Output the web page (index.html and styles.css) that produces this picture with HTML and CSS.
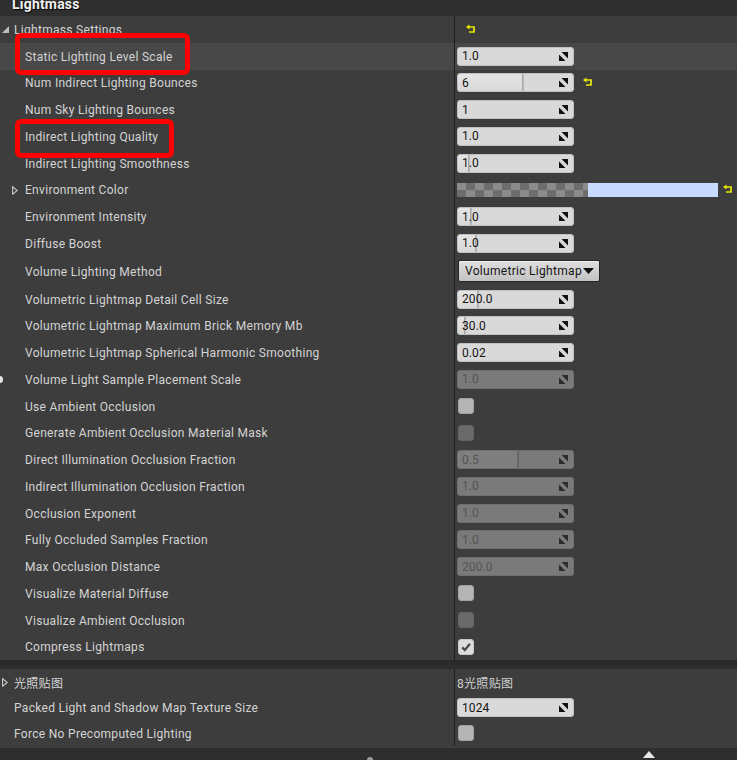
FILE: index.html
```html
<!DOCTYPE html>
<html>
<head>
<meta charset="utf-8">
<link rel="stylesheet" href="styles.css">
</head>
<body>
<div class="panel">
  <div class="header"><span>Lightmass</span></div>
  <div class="section">
    <div class="row">
      <div class="name cat"><svg class="tri-open" viewBox="0 0 7 7"><polygon points="7,0 7,7 0,7"/></svg>Lightmass Settings</div>
      <div class="val"><svg class="reset r1" viewBox="0 0 10 9"><path d="M3 2 H8 V7 H3"/><polygon points="0,2 3.5,-0.5 3.5,4.5"/></svg></div>
    </div>
    <div class="row hl">
      <div class="name">Static Lighting Level Scale</div>
      <div class="val"><div class="spin"><span class="txt">1.0</span><svg class="arr" viewBox="0 0 9 9"><polygon points="2.5,0 9,0 9,6.5"/><polygon points="0,2.5 0,9 6.5,9"/></svg></div></div>
    </div>
    <div class="row">
      <div class="name">Num Indirect Lighting Bounces</div>
      <div class="val"><div class="spin"><div class="fill big" style="width:64px"></div><span class="txt">6</span><svg class="arr" viewBox="0 0 9 9"><polygon points="2.5,0 9,0 9,6.5"/><polygon points="0,2.5 0,9 6.5,9"/></svg></div><svg class="reset" viewBox="0 0 10 9"><path d="M3 2 H8 V7 H3"/><polygon points="0,2 3.5,-0.5 3.5,4.5"/></svg></div>
    </div>
    <div class="row">
      <div class="name">Num Sky Lighting Bounces</div>
      <div class="val"><div class="spin"><span class="txt">1</span><svg class="arr" viewBox="0 0 9 9"><polygon points="2.5,0 9,0 9,6.5"/><polygon points="0,2.5 0,9 6.5,9"/></svg></div></div>
    </div>
    <div class="row">
      <div class="name">Indirect Lighting Quality</div>
      <div class="val"><div class="spin"><span class="txt">1.0</span><svg class="arr" viewBox="0 0 9 9"><polygon points="2.5,0 9,0 9,6.5"/><polygon points="0,2.5 0,9 6.5,9"/></svg></div></div>
    </div>
    <div class="row">
      <div class="name">Indirect Lighting Smoothness</div>
      <div class="val"><div class="spin"><div class="fill" style="width:10px"></div><span class="txt">1.0</span><svg class="arr" viewBox="0 0 9 9"><polygon points="2.5,0 9,0 9,6.5"/><polygon points="0,2.5 0,9 6.5,9"/></svg></div></div>
    </div>
    <div class="row">
      <div class="name"><svg class="tri-closed" viewBox="0 0 6 9"><polygon points="0.6,0.8 5.2,4.5 0.6,8.2"/></svg>Environment Color</div>
      <div class="val gap5"><div class="colorbar"><div class="checker"></div><div class="blue"></div></div><svg class="reset" viewBox="0 0 10 9"><path d="M3 2 H8 V7 H3"/><polygon points="0,2 3.5,-0.5 3.5,4.5"/></svg></div>
    </div>
    <div class="row">
      <div class="name">Environment Intensity</div>
      <div class="val"><div class="spin"><div class="fill" style="width:12px"></div><span class="txt">1.0</span><svg class="arr" viewBox="0 0 9 9"><polygon points="2.5,0 9,0 9,6.5"/><polygon points="0,2.5 0,9 6.5,9"/></svg></div></div>
    </div>
    <div class="row">
      <div class="name">Diffuse Boost</div>
      <div class="val"><div class="spin"><div class="fill" style="width:17px"></div><span class="txt">1.0</span><svg class="arr" viewBox="0 0 9 9"><polygon points="2.5,0 9,0 9,6.5"/><polygon points="0,2.5 0,9 6.5,9"/></svg></div></div>
    </div>
    <div class="row tall">
      <div class="name">Volume Lighting Method</div>
      <div class="val"><div class="combo"><span>Volumetric Lightmap</span><svg class="down" viewBox="0 0 11 6"><polygon points="0,0 11,0 5.5,6"/></svg></div></div>
    </div>
    <div class="row">
      <div class="name">Volumetric Lightmap Detail Cell Size</div>
      <div class="val"><div class="spin"><div class="fill" style="width:19px"></div><span class="txt">200.0</span><svg class="arr" viewBox="0 0 9 9"><polygon points="2.5,0 9,0 9,6.5"/><polygon points="0,2.5 0,9 6.5,9"/></svg></div></div>
    </div>
    <div class="row">
      <div class="name">Volumetric Lightmap Maximum Brick Memory Mb</div>
      <div class="val"><div class="spin"><div class="fill" style="width:6px"></div><span class="txt">30.0</span><svg class="arr" viewBox="0 0 9 9"><polygon points="2.5,0 9,0 9,6.5"/><polygon points="0,2.5 0,9 6.5,9"/></svg></div></div>
    </div>
    <div class="row">
      <div class="name">Volumetric Lightmap Spherical Harmonic Smoothing</div>
      <div class="val"><div class="spin"><span class="txt">0.02</span><svg class="arr" viewBox="0 0 9 9"><polygon points="2.5,0 9,0 9,6.5"/><polygon points="0,2.5 0,9 6.5,9"/></svg></div></div>
    </div>
    <div class="row">
      <div class="name"><span class="dot"></span>Volume Light Sample Placement Scale</div>
      <div class="val"><div class="spin dis"><span class="txt">1.0</span><svg class="arr" viewBox="0 0 9 9"><polygon points="2.5,0 9,0 9,6.5"/><polygon points="0,2.5 0,9 6.5,9"/></svg></div></div>
    </div>
    <div class="row">
      <div class="name">Use Ambient Occlusion</div>
      <div class="val"><div class="cb"></div></div>
    </div>
    <div class="row">
      <div class="name">Generate Ambient Occlusion Material Mask</div>
      <div class="val"><div class="cb dis"></div></div>
    </div>
    <div class="row">
      <div class="name">Direct Illumination Occlusion Fraction</div>
      <div class="val"><div class="spin dis"><div class="fill" style="width:59px"></div><span class="txt">0.5</span><svg class="arr" viewBox="0 0 9 9"><polygon points="2.5,0 9,0 9,6.5"/><polygon points="0,2.5 0,9 6.5,9"/></svg></div></div>
    </div>
    <div class="row">
      <div class="name">Indirect Illumination Occlusion Fraction</div>
      <div class="val"><div class="spin dis"><span class="txt">1.0</span><svg class="arr" viewBox="0 0 9 9"><polygon points="2.5,0 9,0 9,6.5"/><polygon points="0,2.5 0,9 6.5,9"/></svg></div></div>
    </div>
    <div class="row">
      <div class="name">Occlusion Exponent</div>
      <div class="val"><div class="spin dis"><span class="txt">1.0</span><svg class="arr" viewBox="0 0 9 9"><polygon points="2.5,0 9,0 9,6.5"/><polygon points="0,2.5 0,9 6.5,9"/></svg></div></div>
    </div>
    <div class="row">
      <div class="name">Fully Occluded Samples Fraction</div>
      <div class="val"><div class="spin dis"><span class="txt">1.0</span><svg class="arr" viewBox="0 0 9 9"><polygon points="2.5,0 9,0 9,6.5"/><polygon points="0,2.5 0,9 6.5,9"/></svg></div></div>
    </div>
    <div class="row">
      <div class="name">Max Occlusion Distance</div>
      <div class="val"><div class="spin dis"><span class="txt">200.0</span><svg class="arr" viewBox="0 0 9 9"><polygon points="2.5,0 9,0 9,6.5"/><polygon points="0,2.5 0,9 6.5,9"/></svg></div></div>
    </div>
    <div class="row">
      <div class="name">Visualize Material Diffuse</div>
      <div class="val"><div class="cb"></div></div>
    </div>
    <div class="row">
      <div class="name">Visualize Ambient Occlusion</div>
      <div class="val"><div class="cb dis"></div></div>
    </div>
    <div class="row">
      <div class="name">Compress Lightmaps</div>
      <div class="val"><div class="cb on"><svg viewBox="0 0 12 12"><path d="M2.2 6.4 L4.8 9 L10 2.8"/></svg></div></div>
    </div>
  </div>
  <div class="sep"></div>
  <div class="section two">
    <div class="row">
      <div class="name"><svg class="tri-closed" viewBox="0 0 6 9"><polygon points="0.6,0.8 5.2,4.5 0.6,8.2"/></svg>光照贴图</div>
      <div class="val"><span class="plain">8光照贴图</span></div>
    </div>
    <div class="row">
      <div class="name">Packed Light and Shadow Map Texture Size</div>
      <div class="val"><div class="spin"><span class="txt">1024</span><svg class="arr" viewBox="0 0 9 9"><polygon points="2.5,0 9,0 9,6.5"/><polygon points="0,2.5 0,9 6.5,9"/></svg></div></div>
    </div>
    <div class="row">
      <div class="name">Force No Precomputed Lighting</div>
      <div class="val"><div class="cb"></div></div>
    </div>
  </div>
  <div class="footer"><span class="fdot"></span><svg class="fup" viewBox="0 0 12 7"><polygon points="6,0 12,7 0,7"/></svg></div>
  <div class="mark m1"></div>
  <div class="mark m2"></div>
</div>
</body>
</html>
```

FILE: styles.css
```css
html, body {
  margin: 0;
  padding: 0;
  background: #3d3d3d;
}
body {
  font-family: Roboto, "Noto Sans CJK SC", sans-serif;
  font-size: 12px;
  letter-spacing: 0.3px;
  color: #d4d4d4;
}
.panel {
  position: relative;
  width: 737px;
  height: 760px;
  overflow: hidden;
  background: #3d3d3d;
  display: flex;
  flex-direction: column;
}
.header {
  height: 16px;
  flex: none;
  background: #2f2f2f;
  overflow: hidden;
  padding-left: 12px;
}
.header span {
  display: block;
  margin-top: -4px;
  font-size: 14px;
  font-weight: 700;
  letter-spacing: 0.2px;
  line-height: 16px;
  color: #f0f0f0;
  text-shadow: 1px 1px 1px #000;
}
.section {
  flex: none;
}
.row {
  display: flex;
  height: 26.75px;
}
.row.tall {
  height: 29px;
}
.row.hl {
  background: #484848;
}
.name {
  width: 455px;
  flex: none;
  box-sizing: border-box;
  border-right: 1px solid #1d1d1d;
  display: flex;
  align-items: center;
  padding-left: 25px;
  padding-top: 1px;
  white-space: nowrap;
}
.name.cat {
  padding-left: 2px;
}
.tri-open {
  width: 7px;
  height: 7px;
  margin-right: 5px;
  fill: #bdbdbd;
}
.tri-closed {
  width: 6px;
  height: 9px;
  margin-left: -13px;
  margin-right: 7px;
  fill: none;
  stroke: #c8c8c8;
  stroke-width: 1.1;
}
.two .name {
  padding-left: 14px;
}
.two .tri-closed {
  margin-left: -12px;
  margin-right: 6px;
}
.dot {
  width: 7px;
  height: 7px;
  border-radius: 50%;
  background: #e6e6e6;
  margin-left: -29px;
  margin-right: 22px;
  flex: none;
}
.val {
  flex: 1;
  display: flex;
  align-items: center;
  padding-left: 2px;
  gap: 9px;
}
.val.gap5 {
  gap: 5px;
}
.reset {
  width: 10px;
  height: 9px;
  flex: none;
  overflow: visible;
}
.reset path {
  fill: none;
  stroke: #e9e900;
  stroke-width: 1.7;
}
.reset polygon {
  fill: #e9e900;
}
.reset.r1 {
  margin-left: 9px;
}
.spin {
  position: relative;
  width: 117px;
  height: 19px;
  flex: none;
  box-sizing: border-box;
  border-radius: 3px;
  background: #d9d9d9;
  border: 1px solid #c0c0c0;
  display: flex;
  align-items: center;
  padding: 0 5px 0 4px;
  color: #141414;
  letter-spacing: 0.1px;
  overflow: hidden;
}
.fill {
  position: absolute;
  left: 0;
  top: 0;
  bottom: 0;
  background: linear-gradient(#e4e4e4, #d8d8d8);
  border-right: 1px solid #a8a8a8;
  border-radius: 2px 0 0 2px;
  box-shadow: 1px 0 1px rgba(0, 0, 0, 0.15);
}
.spin .txt {
  position: relative;
  flex: 1;
}
.arr {
  position: relative;
  width: 9px;
  height: 9px;
  fill: #111;
}
.spin.dis {
  background: #7a7a7a;
  border-color: #6e6e6e;
  color: #555;
}
.spin.dis .fill {
  background: #7f7f7f;
  border-right-color: #6a6a6a;
}
.spin.dis .arr {
  fill: #2c2c2c;
}
.colorbar {
  display: flex;
  width: 261px;
  height: 14px;
}
.checker {
  width: 131px;
  background: repeating-conic-gradient(#6d6d6d 0 25%, #8b8b8b 0 50%) 0 0 / 18px 14px;
}
.blue {
  flex: 1;
  background: #c8dbfe;
}
.combo {
  width: 142px;
  height: 22px;
  flex: none;
  margin-left: 1px;
  box-sizing: border-box;
  border: 1px solid #262626;
  border-radius: 2px;
  background: linear-gradient(#dedede, #c3c3c3);
  box-shadow: inset 0 1px 0 #efefef;
  color: #151515;
  display: flex;
  align-items: center;
  padding-left: 6px;
  gap: 1px;
}
.down {
  width: 11px;
  height: 6px;
  fill: #111;
}
.cb {
  width: 16px;
  height: 16px;
  flex: none;
  margin-left: 1px;
  box-sizing: border-box;
  border-radius: 3px;
  background: #b4b4b4;
  border: 1px solid #a2a2a2;
}
.cb.dis {
  background: #6a6a6a;
  border-color: #636363;
}
.cb.on {
  background: #dcdcdc;
  border-color: #c8c8c8;
  display: flex;
  align-items: center;
  justify-content: center;
}
.cb.on svg {
  width: 12px;
  height: 12px;
  fill: none;
  stroke: #4a4a4a;
  stroke-width: 2.2;
}
.plain {
  color: #cfcfcf;
}
.sep {
  height: 9px;
  flex: none;
  background: linear-gradient(#282828, #303030);
}
.two .row {
  height: 25.7px;
}
.footer {
  flex: 1;
  margin-top: 2px;
  background: #2e2e2e;
  display: flex;
  align-items: flex-end;
  padding-left: 367px;
}
.fdot {
  width: 6px;
  height: 6px;
  border-radius: 50%;
  background: #9a9a9a;
  margin-bottom: -3px;
  flex: none;
}
.fup {
  width: 12px;
  height: 7px;
  margin-left: 270px;
  margin-bottom: 2px;
  fill: #e8e8e8;
}
.mark {
  position: absolute;
  box-sizing: border-box;
  border: 5px solid #ff0000;
  border-radius: 6px;
}
.m1 {
  left: 15px;
  top: 33px;
  width: 175px;
  height: 42px;
}
.m2 {
  left: 15px;
  top: 119px;
  width: 159px;
  height: 39px;
}
```
